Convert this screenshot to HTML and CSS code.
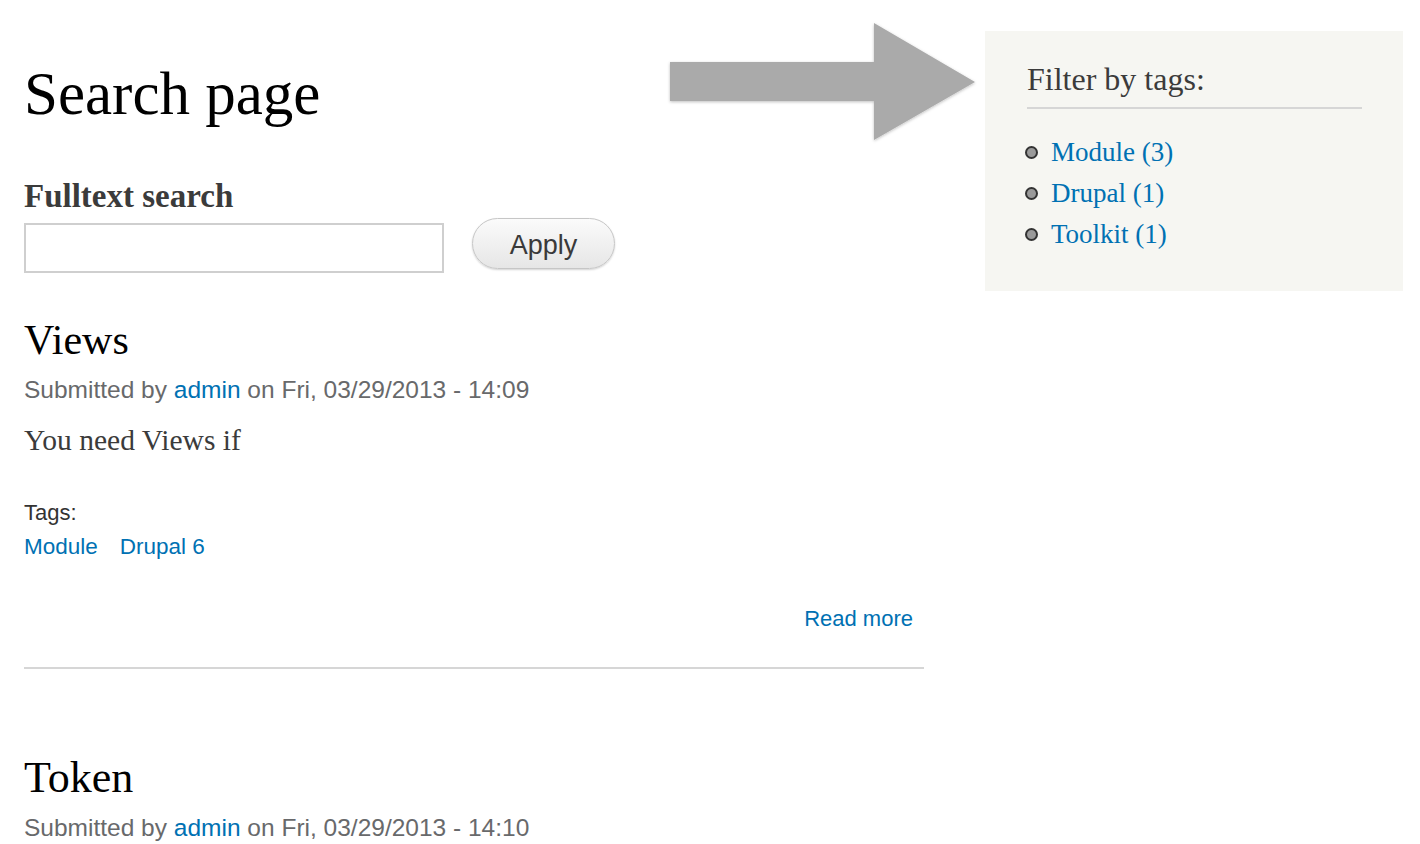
FILE: index.html
```html
<!DOCTYPE html>
<html lang="en">
  <head>
    <meta charset="utf-8">
    <title>Search page</title>
    <link rel="stylesheet" href="styles.css">
  </head>
  <body>
    <div class="page">
      <main class="content">
        <h1 class="page-title">Search page</h1>
        <form class="search-form">
          <label class="form-label" for="fulltext">Fulltext search</label>
          <div class="form-row">
            <input id="fulltext" class="form-text" type="text">
            <button class="form-submit" type="button">Apply</button>
          </div>
        </form>

        <article class="node">
          <h2 class="node-title">Views</h2>
          <div class="submitted">Submitted by <a href="#">admin</a> on Fri, 03/29/2013 - 14:09</div>
          <p class="node-body">You need Views if</p>
          <div class="tags-label">Tags:</div>
          <ul class="tags">
            <li><a href="#">Module</a></li>
            <li><a href="#">Drupal 6</a></li>
          </ul>
          <div class="links"><a href="#">Read more</a></div>
        </article>

        <article class="node node-last">
          <h2 class="node-title">Token</h2>
          <div class="submitted">Submitted by <a href="#">admin</a> on Fri, 03/29/2013 - 14:10</div>
        </article>
      </main>

      <aside class="sidebar">
        <div class="block">
          <h2 class="block-title">Filter by tags:</h2>
          <ul class="facets">
            <li><a href="#">Module (3)</a></li>
            <li><a href="#">Drupal (1)</a></li>
            <li><a href="#">Toolkit (1)</a></li>
          </ul>
        </div>
      </aside>
    </div>

    <!-- annotation arrow laid over the page -->
    <svg class="arrow" width="320" height="130" viewBox="0 0 320 130" xmlns="http://www.w3.org/2000/svg">
      <defs>
        <filter id="shade" x="-10%" y="-10%" width="120%" height="120%">
          <feDropShadow dx="0" dy="1" stdDeviation="1.5" flood-color="#000" flood-opacity="0.25"/>
        </filter>
      </defs>
      <polygon points="4,42 208,42 208,3 309,62 208,120 208,81 4,81" fill="#aaaaaa" filter="url(#shade)"/>
    </svg>
  </body>
</html>
```

FILE: styles.css
```css
/* reset/general */
* { box-sizing: border-box; }
body { margin: 0; font-family: "Liberation Serif", serif; color: #3b3b3b; background: #fff; }
a { color: #0071b3; text-decoration: none; }
ul { margin: 0; padding: 0; list-style: none; }

.page { display: flex; align-items: flex-start; padding: 0 17px 0 24px; gap: 61px; }
.content { width: 900px; flex: none; }
.sidebar { flex: 1; padding-top: 31px; }

/* main column */
.page-title { margin: 59px 0 0; font-size: 61px; line-height: 70px; font-weight: normal; color: #000; }
.search-form { margin-top: 49px; }
.form-label { display: block; font-size: 33px; line-height: 36px; font-weight: bold; color: #3b3b3b; }
.form-row { display: flex; align-items: flex-start; gap: 28px; margin-top: 4px; }
.form-text { width: 420px; height: 50px; margin-top: 5px; border: 2px solid #cfcfcf; background: #fff; font-size: 20px; }
.form-submit {
  width: 143px; height: 51px; border: 1px solid #c6c6c6; border-radius: 26px;
  background: linear-gradient(#fbfbfb, #e6e6e6); box-shadow: 0 1px 2px rgba(0,0,0,.18);
  font-family: "Liberation Sans", sans-serif; font-size: 27px; color: #3a3a3a; padding: 4px 0 0;
}

.node-title { margin: 42px 0 0; font-size: 42px; line-height: 50px; font-weight: normal; color: #000; }
.node-last .node-title { margin-top: 84px; font-size: 44px; }
.submitted { margin-top: 10px; font-family: "Liberation Sans", sans-serif; font-size: 24.5px; line-height: 30px; color: #68696b; }
.node-body { margin: 17px 0 0; font-size: 29.5px; line-height: 36px; color: #3b3b3b; }
.tags-label { margin-top: 40px; font-family: "Liberation Sans", sans-serif; font-size: 22px; line-height: 30px; color: #333; }
.tags { display: flex; gap: 22px; margin-top: 4px; font-family: "Liberation Sans", sans-serif; font-size: 22.5px; line-height: 30px; }
.links { margin-top: 42px; padding-right: 11px; text-align: right; font-family: "Liberation Sans", sans-serif; font-size: 22px; line-height: 30px; padding-bottom: 33px; border-bottom: 2px solid #d6d6d6; }

/* sidebar block */
.block { background: #f6f6f2; padding: 28px 41px 36px 42px; }
.block-title { margin: 0; padding-bottom: 8px; border-bottom: 2px solid #d6d6d6; font-size: 32px; line-height: 40px; font-weight: normal; color: #3b3b3b; }
.facets { margin-top: 23px; font-size: 27px; line-height: 41px; }
.facets li { display: flex; align-items: center; gap: 13px; }
.facets li::before {
  content: ""; width: 9px; height: 9px; margin-left: -2px; border-radius: 50%;
  border: 2px solid #333; background: #9a9a9a; flex: none;
}

/* annotation */
.arrow { position: absolute; left: 666px; top: 20px; }
```
